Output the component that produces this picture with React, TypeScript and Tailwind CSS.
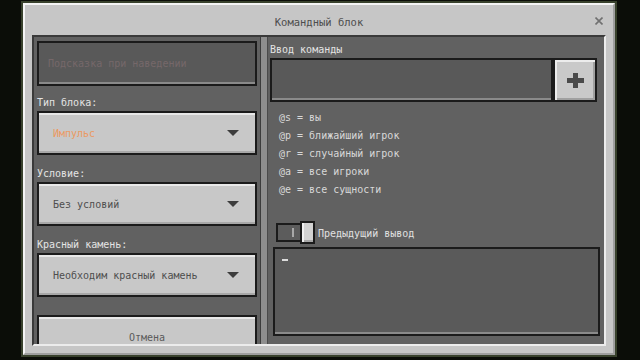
import React from "react";

function Arrow() {
  return (
    <svg width="12" height="6" viewBox="0 0 12 6">
      <polygon points="0,0 12,0 6,6" fill="#3c3c3c" />
    </svg>
  );
}

function Dropdown({ text, color }: { text: string; color: string }) {
  return (
    <div className="h-[44px] border-2 border-[#1b1b1b] bg-[#c8c8c8] shadow-[inset_0_2px_0_#e8e8e8,inset_0_-2px_0_#a8a8a8] flex items-center justify-between pl-[14px] pr-[16px]">
      <span className={`${color} pt-[1px]`}>{text}</span>
      <Arrow />
    </div>
  );
}

export default function App() {
  return (
    <div className="w-[640px] h-[360px] overflow-hidden bg-[#0b0d08] pl-[21px] pt-[1px] font-['DejaVu_Sans_Mono','Liberation_Mono',monospace] text-[10px] leading-[12px]">
      <div className="w-[596px] h-[356px] border-2 border-[#38412c] bg-[#c6c6c6]">
        <div className="h-full flex flex-col border-2 border-t-[#f4f4f4] border-l-[#f4f4f4] border-b-[#9e9e9e] border-r-[#9e9e9e]">
          <div className="h-[30px] grid grid-cols-[1fr_auto_1fr] items-center">
            <div />
            <div className="text-[#4d4d4d] text-[10.5px] pt-[3px]">Командный блок</div>
            <div className="flex justify-end pr-[10px] pt-[1px]">
              <svg width="8" height="8" viewBox="0 0 8 8">
                <path d="M0.5 0.5 L7.5 7.5 M7.5 0.5 L0.5 7.5" stroke="#707070" strokeWidth="1.6" />
              </svg>
            </div>
          </div>
          <div className="mx-[7px] h-[311px] flex overflow-hidden bg-[#616161] border-2 border-t-[#3a3a3a] border-l-[#3a3a3a] border-b-[#ececec] border-r-[#ececec]">
            {/* left column */}
            <div className="w-[226px] shrink-0 px-[3px] flex flex-col">
              <div className="mt-[4px] h-[45px] shrink-0 border-2 border-[#1b1b1b] bg-[#595959] shadow-[inset_0_-2px_0_#8a8a8a] flex items-center pl-[9px]">
                <span className="text-[#76686a] pt-[1px]">Подсказка при наведении</span>
              </div>
              <div className="mt-[10px] pt-[1px] h-[12px] text-[#e4e4e4]">Тип блока:</div>
              <div className="mt-[3px]">
                <Dropdown text="Импульс" color="text-[#ec9a62]" />
              </div>
              <div className="mt-[12px] pt-[1px] h-[12px] text-[#e4e4e4]">Условие:</div>
              <div className="mt-[3px]">
                <Dropdown text="Без условий" color="text-[#4e4e4e]" />
              </div>
              <div className="mt-[12px] pt-[1px] h-[12px] text-[#e4e4e4]">Красный камень:</div>
              <div className="mt-[3px]">
                <Dropdown text="Необходим красный камень" color="text-[#4e4e4e]" />
              </div>
              <div className="mt-[18px] h-[44px] shrink-0 border-2 border-[#1b1b1b] bg-[#c8c8c8] shadow-[inset_0_2px_0_#e8e8e8] flex items-center justify-center">
                <span className="text-[#5a5a5a] pt-[1px]">Отмена</span>
              </div>
            </div>
            {/* separator */}
            <div className="w-[8px] shrink-0 bg-[#8e8e8e] border-l border-r border-l-[#3c3c3c] border-r-[#4a4a4a]" />
            {/* right column */}
            <div className="flex-1 flex flex-col">
              <div className="mt-[6px] pt-[1px] h-[12px] pl-[2px] text-[#e4e4e4]">Ввод команды</div>
              <div className="mt-[3px] ml-[2px] flex">
                <div className="w-[283px] h-[44px] border-2 border-[#1b1b1b] bg-[#595959] shadow-[inset_0_-2px_0_#8a8a8a]" />
                <div className="w-[44px] h-[44px] border-2 border-[#1b1b1b] bg-[#c9c9c9] shadow-[inset_2px_2px_0_#ececec,inset_-2px_-2px_0_#a0a0a0] flex items-center justify-center">
                  <svg width="17" height="15" viewBox="0 0 17 15">
                    <rect x="6" y="0" width="5" height="15" fill="#4a4a4a" />
                    <rect x="0" y="5" width="17" height="5" fill="#4a4a4a" />
                  </svg>
                </div>
              </div>
              <div className="mt-[7px] pl-[11px] flex flex-col text-[#d8d8d8] leading-[18px]">
                <div>@s = вы</div>
                <div>@p = ближайший игрок</div>
                <div>@r = случайный игрок</div>
                <div>@a = все игроки</div>
                <div>@e = все сущности</div>
              </div>
              <div className="mt-[22px] h-[23px] pl-[8px] flex items-center">
                <div className="w-[26px] h-[19px] border-2 border-[#1b1b1b] bg-[#5c5c5c] flex items-center pl-[14px]">
                  <div className="w-[2px] h-[9px] bg-[#a8a8a8]" />
                </div>
                <div className="-ml-[2px] w-[15px] h-[23px] border-2 border-[#1b1b1b] bg-[#d2d2d2] shadow-[inset_2px_0_0_#f0f0f0,inset_0_-2px_0_#a8a8a8]" />
                <div className="ml-[3px] pt-[3px] text-[#e0e0e0]">Предыдущий вывод</div>
              </div>
              <div className="mt-[3px] ml-[5px] w-[327px] h-[89px] border-2 border-[#1b1b1b] bg-[#5a5a5a] shadow-[inset_0_-2px_0_#8a8a8a] pl-[7px] pt-[10px]">
                <div className="w-[6px] h-[2px] bg-[#dcdcdc]" />
              </div>
            </div>
          </div>
        </div>
      </div>
    </div>
  );
}
